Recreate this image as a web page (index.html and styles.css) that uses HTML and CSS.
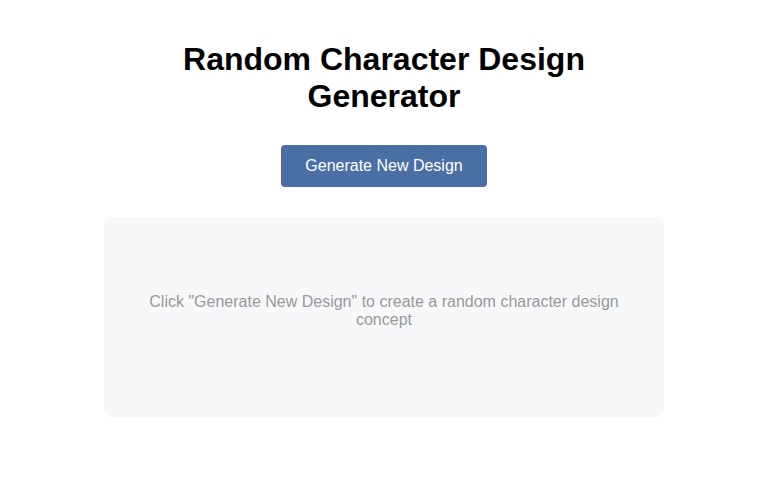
FILE: index.html
```html
<!DOCTYPE html>
<html lang="en">
<head>
<meta charset="utf-8">
<title>Random Character Design Generator</title>
<link rel="stylesheet" href="styles.css">
</head>
<body>
<main class="container">
  <h1 class="title">Random Character Design Generator</h1>
  <div class="actions">
    <button class="generate-btn" type="button">Generate New Design</button>
  </div>
  <section class="design-box">
    <p class="placeholder">Click "Generate New Design" to create a random character design concept</p>
  </section>
</main>
</body>
</html>
```
FILE: styles.css
```css
html, body {
  margin: 0;
  padding: 0;
  background: #ffffff;
}
body {
  font-family: "Liberation Sans", Arial, sans-serif;
  color: #000;
}
.container {
  max-width: 560px;
  margin: 0 auto;
  padding: 20px 20px;
}
.title {
  font-size: 32px;
  font-weight: bold;
  text-align: center;
  margin: 21px 0 30px;
  line-height: 37px;
}
.actions {
  display: flex;
  justify-content: center;
  margin-bottom: 30px;
}
.generate-btn {
  font-family: "Liberation Sans", Arial, sans-serif;
  font-size: 16px;
  line-height: 18px;
  color: #ffffff;
  background: #4a6fa5;
  border: none;
  border-radius: 4px;
  padding: 12px 24px;
  cursor: pointer;
}
.design-box {
  box-sizing: border-box;
  min-height: 200px;
  background: #f7f8fa;
  border-radius: 8px;
  padding: 20px 20px 32px;
  display: flex;
  align-items: center;
  justify-content: center;
}
.placeholder {
  margin: 0;
  text-align: center;
  color: #999999;
  font-size: 16px;
  line-height: 18px;
}
```
